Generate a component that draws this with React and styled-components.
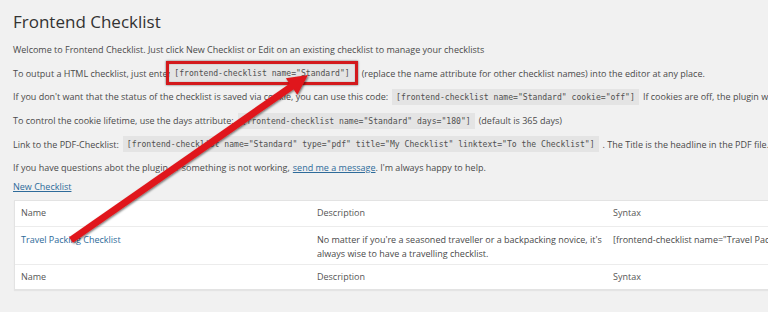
import React from "react";
import styled, { createGlobalStyle } from "styled-components";

const GlobalStyle = createGlobalStyle`
  html, body {
    margin: 0;
    padding: 0;
    background: #f1f1f1;
  }
  body {
    width: 768px;
    height: 312px;
    overflow: hidden;
    font-family: "Open Sans", "Noto Sans", sans-serif;
    color: #4a4a4a;
  }
`;

const Page = styled.div`
  position: relative;
  width: 768px;
  height: 312px;
  overflow: hidden;
  padding: 10px 0 0 13px;
  box-sizing: border-box;
`;

const Title = styled.h1`
  margin: 0 0 5px;
  font-size: 17px;
  font-weight: 400;
  line-height: 23px;
  color: #333;
`;

const Text = styled.p`
  margin: 0;
  height: 23.6px;
  display: flex;
  align-items: center;
  white-space: nowrap;
  font-size: 9px;
`;

const Code = styled.code`
  display: inline-block;
  margin: 0 4px;
  padding: 2px 4px;
  background: #e4e4e4;
  font-family: "DejaVu Sans Mono", "Liberation Mono", monospace;
  font-size: 8.1px;
  line-height: 12px;
  color: #505050;
`;

const Highlight = styled.span`
  display: inline-block;
  margin: 0 4px 0 -5px;
  padding: 1px;
  border: 3px solid #d3191c;
  box-shadow: 0 0 2px rgba(0, 0, 0, 0.6), inset 0 0 2px rgba(0, 0, 0, 0.4);

  & > code {
    margin: 0;
  }
`;

const Link = styled.a`
  color: #2e6b9a;
  text-decoration: underline;
  margin-left: 3px;
`;

const NewLink = styled.a`
  display: block;
  margin-top: 1px;
  font-size: 9px;
  color: #2e6b9a;
  text-decoration: underline;
  line-height: 12px;
`;

const Table = styled.div`
  margin-top: 7px;
  margin-left: 1px;
  width: 900px;
  background: #fff;
  border: 1px solid #e3e3e3;
  box-shadow: 0 1px 1px rgba(0, 0, 0, 0.05);
  font-size: 9px;
`;

const Row = styled.div`
  display: grid;
  grid-template-columns: 296px 296px 1fr;
  align-items: ${(p) => (p.$head ? "center" : "start")};
  height: ${(p) => p.$h}px;
  padding: ${(p) => (p.$head ? "0" : "6px")} 0 0 6px;
  box-sizing: border-box;
  border-top: ${(p) => (p.$first ? "none" : "1px solid #ececec")};
  color: ${(p) => (p.$head ? "#555" : "#4a4a4a")};
  line-height: 14px;
`;

const Cell = styled.div`
  padding-right: 10px;
  white-space: ${(p) => (p.$wrap ? "normal" : "nowrap")};
`;

const RowLink = styled.a`
  color: #2e6b9a;
  text-decoration: none;
`;

const Annotation = styled.svg`
  position: absolute;
  left: 0;
  top: 0;
  pointer-events: none;
`;

function Arrow() {
  const tip = [308, 75];
  const tail = [71, 240];
  const dx = tip[0] - tail[0];
  const dy = tip[1] - tail[1];
  const len = Math.hypot(dx, dy);
  const ux = dx / len;
  const uy = dy / len;
  const head = 20;
  const half = 10;
  const bx = tip[0] - ux * head;
  const by = tip[1] - uy * head;
  const w1 = [bx + -uy * half, by + ux * half];
  const w2 = [bx - -uy * half, by - ux * half];
  return (
    <Annotation width="768" height="312">
      <defs>
        <filter id="sh" x="-10%" y="-10%" width="120%" height="120%">
          <feDropShadow dx="1" dy="1" stdDeviation="1.2" floodColor="#000" floodOpacity="0.55" />
        </filter>
      </defs>
      <g filter="url(#sh)">
        <line
          x1={tail[0]}
          y1={tail[1]}
          x2={bx + ux * 2}
          y2={by + uy * 2}
          stroke="#e0191b"
          strokeWidth="7"
        />
        <polygon points={`${tip.join(",")} ${w1.join(",")} ${w2.join(",")}`} fill="#e0191b" />
      </g>
    </Annotation>
  );
}

export default function App() {
  return (
    <>
      <GlobalStyle />
      <Page>
        <Title>Frontend Checklist</Title>
        <Text>
          Welcome to Frontend Checklist. Just click New Checklist or Edit on an existing checklist to manage your checklists
        </Text>
        <Text>
          To output a HTML checklist, just enter
          <Highlight>
            <Code>[frontend-checklist name="Standard"]</Code>
          </Highlight>
          (replace the name attribute for other checklist names) into the editor at any place.
        </Text>
        <Text>
          If you don't want that the status of the checklist is saved via cookie, you can use this code:
          <Code>[frontend-checklist name="Standard" cookie="off"]</Code>
          If cookies are off, the plugin will save the status in the database.
        </Text>
        <Text>
          To control the cookie lifetime, use the days attribute:
          <Code>[frontend-checklist name="Standard" days="180"]</Code>
          (default is 365 days)
        </Text>
        <Text>
          Link to the PDF-Checklist:
          <Code>[frontend-checklist name="Standard" type="pdf" title="My Checklist" linktext="To the Checklist"]</Code>
          . The Title is the headline in the PDF file.
        </Text>
        <Text>
          If you have questions abot the plugin or something is not working,
          <Link href="#">send me a message</Link>. I'm always happy to help.
        </Text>
        <NewLink href="#">New Checklist</NewLink>
        <Table>
          <Row $head $first $h={25}>
            <Cell>Name</Cell>
            <Cell>Description</Cell>
            <Cell>Syntax</Cell>
          </Row>
          <Row $h={38}>
            <Cell>
              <RowLink href="#">Travel Packing Checklist</RowLink>
            </Cell>
            <Cell $wrap>
              No matter if you're a seasoned traveller or a backpacking novice, it's always wise to have a travelling checklist.
            </Cell>
            <Cell>[frontend-checklist name="Travel Packing Checklist"]</Cell>
          </Row>
          <Row $head $h={25}>
            <Cell>Name</Cell>
            <Cell>Description</Cell>
            <Cell>Syntax</Cell>
          </Row>
        </Table>
        <Arrow />
      </Page>
    </>
  );
}
